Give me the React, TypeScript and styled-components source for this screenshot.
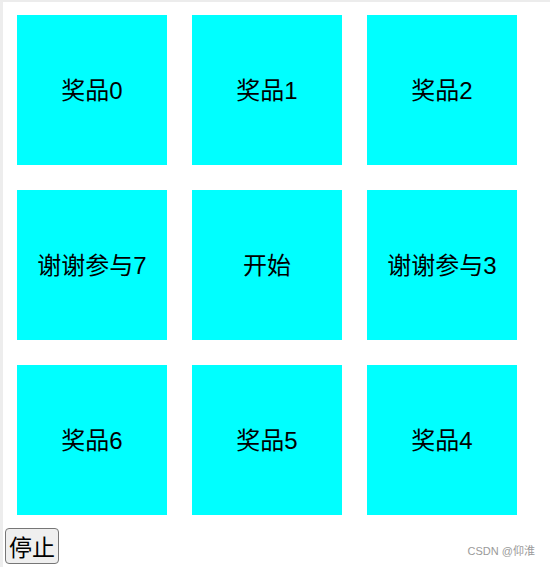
import styled, { createGlobalStyle } from "styled-components";

const prizes = ["奖品0", "奖品1", "奖品2", "谢谢参与7", "开始", "谢谢参与3", "奖品6", "奖品5", "奖品4"];

const GlobalStyle = createGlobalStyle`
  html, body {
    margin: 0;
    padding: 0;
    background: #ffffff;
  }
`;

const Page = styled.div`
  width: 550px;
  height: 567px;
  box-sizing: border-box;
  border-top: 2px solid #ececec;
  border-left: 3px solid #ededed;
  padding: 13px 0 0 14px;
  position: relative;
  font-family: "Liberation Sans", "Noto Sans CJK SC", sans-serif;
`;

const Board = styled.div`
  display: grid;
  grid-template-columns: repeat(3, 150px);
  grid-auto-rows: 150px;
  gap: 25px;
`;

const Cell = styled.div`
  background: #00ffff;
  display: flex;
  align-items: center;
  justify-content: center;
  padding-bottom: 4px;
  box-sizing: border-box;
  font-size: 24px;
  color: #000;
`;

const StopButton = styled.button`
  margin: 13px 0 0 -12px;
  width: 54px;
  height: 36px;
  padding: 0;
  font-family: "Liberation Sans", "Noto Sans CJK SC", sans-serif;
  font-size: 23px;
  color: #000;
  background: #efefef;
  border: 1px solid #767676;
  border-radius: 4px;
`;

const Watermark = styled.div`
  position: absolute;
  right: 15px;
  bottom: 9px;
  font-size: 11px;
  color: #9a9a9a;
`;

const App = () => {
  return (
    <>
      <GlobalStyle />
      <Page>
        <Board>
          {prizes.map((p) => (
            <Cell key={p}>{p}</Cell>
          ))}
        </Board>
        <StopButton>停止</StopButton>
        <Watermark>CSDN @仰淮</Watermark>
      </Page>
    </>
  );
};

export default App;
